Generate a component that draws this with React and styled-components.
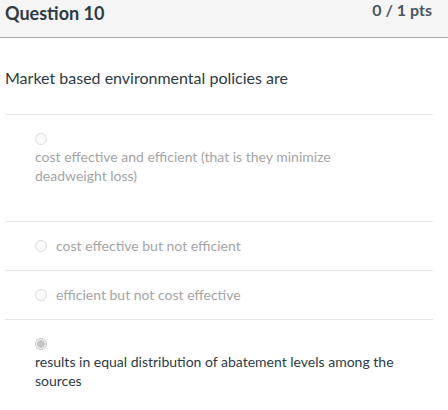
import React from "react";
import styled, { createGlobalStyle } from "styled-components";

const GlobalStyle = createGlobalStyle`
  body {
    margin: 0;
    background: #ffffff;
    font-family: Lato, "Open Sans", sans-serif;
  }
`;

const answers = [
  {
    text: "cost effective and efficient (that is they minimize deadweight loss)",
    stacked: true,
  },
  { text: "cost effective but not efficient" },
  { text: "efficient but not cost effective" },
  {
    text: "results in equal distribution of abatement levels among the sources",
    stacked: true,
    selected: true,
  },
];

const App = () => {
  return (
    <Container>
      <GlobalStyle />
      <Header>
        <Title>Question 10</Title>
        <Points>0 / 1 pts</Points>
      </Header>
      <Body>
        <QuestionText>Market based environmental policies are</QuestionText>
        <AnswerList>
          {answers.map((a, i) => (
            <Answer key={i} stacked={a.stacked}>
              <Label stacked={a.stacked}>
                <Radio selected={a.selected} />
                <AnswerText selected={a.selected}>{a.text}</AnswerText>
              </Label>
            </Answer>
          ))}
        </AnswerList>
      </Body>
    </Container>
  );
};

export default App;

const Container = styled.div`
  width: 448px;
  height: 410px;
  background: #fff;
  overflow: hidden;
`;

const Header = styled.div`
  height: 37px;
  background: #f5f5f5;
  border-bottom: 1px solid #a8a8a8;
  display: flex;
  justify-content: space-between;
  padding: 0 16px 0 5px;
`;

const Title = styled.div`
  font-size: 18px;
  font-weight: 700;
  color: #2d3b45;
  line-height: 24px;
  padding-top: 1px;
`;

const Points = styled.div`
  font-size: 16px;
  font-weight: 700;
  color: #4b5660;
  line-height: 20px;
`;

const Body = styled.div`
  padding: 0 15px 0 5px;
`;

const QuestionText = styled.div`
  font-size: 16px;
  line-height: 22px;
  color: #2d3b45;
  padding: 29px 0 25px;
`;

const AnswerList = styled.div`
  display: flex;
  flex-direction: column;
`;

const Answer = styled.div`
  border-top: 1px solid #e6e6e6;
  padding: ${(p) => (p.stacked ? "18px 0 36px 30px" : "14px 0 15px 30px")};
`;

const Label = styled.label`
  display: flex;
  flex-direction: ${(p) => (p.stacked ? "column" : "row")};
  align-items: ${(p) => (p.stacked ? "flex-start" : "center")};
  gap: ${(p) => (p.stacked ? "2px" : "9px")};
`;

const Radio = styled.span`
  width: 12px;
  height: 12px;
  box-sizing: border-box;
  border-radius: 50%;
  border: 1px solid ${(p) => (p.selected ? "#c8c8c8" : "#dcdcdc")};
  background: ${(p) =>
    p.selected
      ? "radial-gradient(circle, #c4c4c4 0 3.5px, #f2f2f2 4px)"
      : "#fafafa"};
  flex-shrink: 0;
`;

const AnswerText = styled.span`
  font-size: 14px;
  line-height: 19px;
  color: ${(p) => (p.selected ? "#2d3b45" : "#a5a5a5")};
  max-width: 362px;
`;
